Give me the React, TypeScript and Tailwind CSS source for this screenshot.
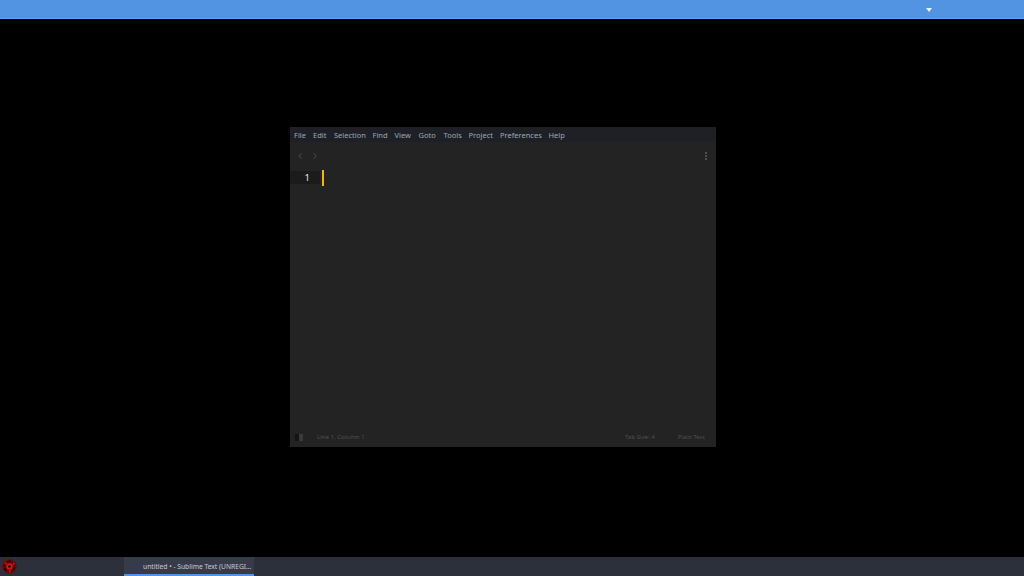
import { ChevronLeft, ChevronRight } from 'lucide-react';

const menus = [
  { label: 'File', w: 'w-[19px]' },
  { label: 'Edit', w: 'w-[21px]' },
  { label: 'Selection', w: 'w-[38.5px]' },
  { label: 'Find', w: 'w-[22px]' },
  { label: 'View', w: 'w-[24px]' },
  { label: 'Goto', w: 'w-[25px]' },
  { label: 'Tools', w: 'w-[25px]' },
  { label: 'Project', w: 'w-[31.5px]' },
  { label: 'Preferences', w: 'w-[48.5px]' },
  { label: 'Help', w: 'w-[20px]' },
];

function Logo() {
  return (
    <svg width="15" height="15" viewBox="0 0 14 14">
      <circle cx="7" cy="7" r="6.8" fill="#6d0a0a" />
      <circle cx="7" cy="7" r="4.8" fill="none" stroke="#140303" strokeWidth="1.4" strokeDasharray="3.5 1.5" />
      <circle cx="7" cy="7" r="2.9" fill="#d81414" />
      <circle cx="7" cy="7" r="1.2" fill="#140303" />
      <circle cx="3.2" cy="4.2" r="1.1" fill="#c81212" />
      <circle cx="10.8" cy="4.4" r="1.1" fill="#c81212" />
      <circle cx="7.4" cy="11.6" r="1.1" fill="#c81212" />
    </svg>
  );
}

export default function App() {
  return (
    <div className="flex flex-col h-[576px] w-[1024px] overflow-hidden bg-black font-['Noto_Sans',sans-serif]">
      <div className="flex h-[19px] shrink-0 justify-end bg-[#5294e2] border-b border-[#62a4f0] pr-[92px] pt-[8px]">
        <div className="w-0 h-0 border-x-[3.5px] border-x-transparent border-t-[4px] border-t-[#eef4fc]" />
      </div>

      <div className="flex-1 pl-[290px] pt-[108px]">
        <div className="flex flex-col w-[426px] h-[320px] bg-[#232323]">
          <div className="flex items-center h-[15px] shrink-0 pl-[4px] pt-[2px] bg-[#1e2025] text-[7.5px] text-[#9ea8b8]">
            {menus.map((m) => (
              <span key={m.label} className={`${m.w} shrink-0 whitespace-nowrap`}>{m.label}</span>
            ))}
          </div>

          <div className="flex items-center justify-between h-[28px] shrink-0 pl-[5px] pr-[9px] text-[#5c5c5c]">
            <div className="flex gap-[5px]">
              <ChevronLeft size={10} strokeWidth={1.8} />
              <ChevronRight size={10} strokeWidth={1.8} />
            </div>
            <div className="flex flex-col gap-[1px]">
              <span className="w-[2px] h-[2px] bg-[#4f4f4f]" />
              <span className="w-[2px] h-[2px] bg-[#4f4f4f]" />
              <span className="w-[2px] h-[2px] bg-[#4f4f4f]" />
            </div>
          </div>

          <div className="flex items-stretch h-[16px] shrink-0">
            <div className="flex items-center justify-end w-[30px] h-[13px] mt-[1px] pt-[1px] pr-[10px] bg-[#1b1b1b] text-[9.5px] text-[#e6e6e6]">1</div>
            <div className="w-[2px] ml-[2px] bg-[#f2b705]" />
          </div>

          <div className="flex-1" />

          <div className="flex items-center h-[20px] shrink-0 pl-[5px] pr-[11px] text-[6.1px] text-[#505050]">
            <div className="flex justify-end w-[8px] h-[7px] bg-[#141414]">
              <div className="w-[4px] bg-[#3a3a3a]" />
            </div>
            <span className="ml-[14px]">Line 1, Column 1</span>
            <span className="ml-auto">Tab Size: 4</span>
            <span className="ml-[23px]">Plain Text</span>
          </div>
        </div>
      </div>

      <div className="flex items-stretch h-[19px] shrink-0 bg-[#2b303b]">
        <div className="flex items-center w-[124px] pl-[2px]">
          <Logo />
        </div>
        <div className="flex flex-col w-[130px] bg-[#353b48]">
          <div className="flex flex-1 items-center pl-[19px] pt-[3px] text-[6.7px] text-[#c8ccd3] whitespace-nowrap">
            untitled • - Sublime Text (UNREGI...
          </div>
          <div className="h-[2px] bg-[#5294e2]" />
        </div>
      </div>
    </div>
  );
}
